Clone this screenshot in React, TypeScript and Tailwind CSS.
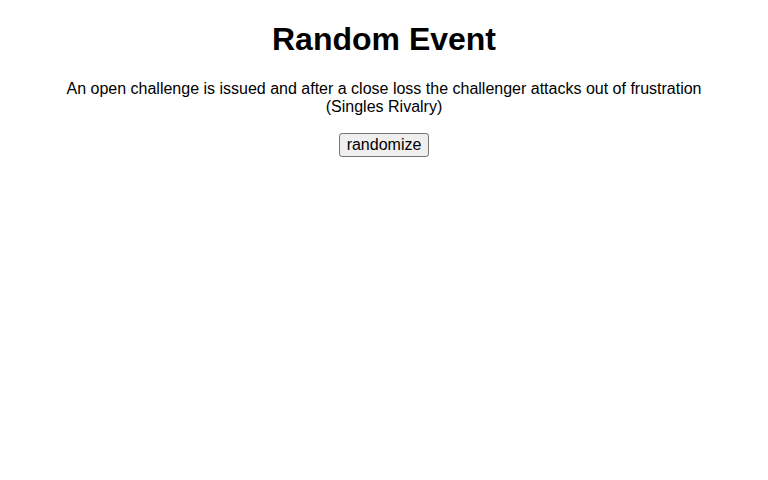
import { useState } from "react";

const EVENTS = [
  "An open challenge is issued and after a close loss the challenger attacks out of frustration (Singles Rivalry)",
  "A tag team partner turns on the other after a miscommunication (Tag Team Breakup)",
  "A returning star interrupts the champion's celebration (Title Feud)",
];

export default function App() {
  const [event, setEvent] = useState(EVENTS[0]);

  function randomize() {
    setEvent(EVENTS[Math.floor(Math.random() * EVENTS.length)]);
  }

  return (
    <main className="min-h-[480px] bg-white text-center text-black font-['Liberation_Sans',Arial,sans-serif]">
      <div className="px-2 pt-[21px]">
        <h1 className="text-[32px] leading-[37px] font-bold">Random Event</h1>
        <p className="mt-[22px] text-base leading-[18.4px] px-[56px]">{event}</p>
        <div className="mt-4">
          <button
            type="button"
            onClick={randomize}
            className="rounded-[3px] border border-[#767676] bg-[#efefef] px-[7px] py-[2px] text-base leading-[18.4px] text-black hover:bg-[#e5e5e5]"
          >
            randomize
          </button>
        </div>
      </div>
    </main>
  );
}
